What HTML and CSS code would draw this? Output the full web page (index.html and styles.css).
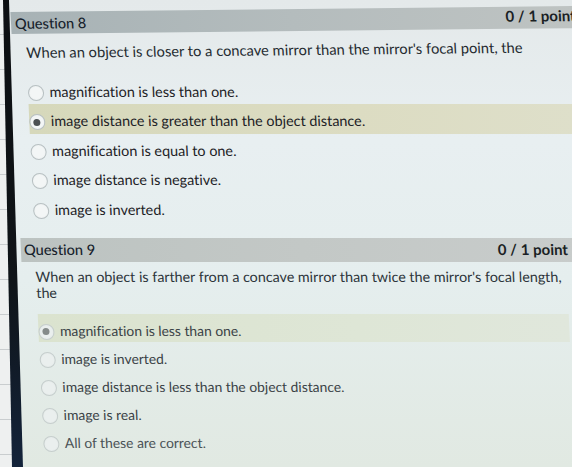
FILE: index.html
```html
<!DOCTYPE html>
<html>
<head>
<meta charset="utf-8">
<link rel="stylesheet" href="styles.css">
</head>
<body>
<div class="screen">
  <div class="display">
    <div class="content">
      <section class="q q8">
        <div class="qhead"><span class="title">Question 8</span><span class="score">0 / 1 point</span></div>
        <p class="qtext">When an object is closer to a concave mirror than the mirror's focal point, the</p>
        <ul class="opts">
          <li class="opt"><span class="radio"></span><span>magnification is less than one.</span></li>
          <li class="opt sel"><span class="radio"></span><span>image distance is greater than the object distance.</span></li>
          <li class="opt"><span class="radio"></span><span>magnification is equal to one.</span></li>
          <li class="opt"><span class="radio"></span><span>image distance is negative.</span></li>
          <li class="opt"><span class="radio"></span><span>image is inverted.</span></li>
        </ul>
      </section>
      <section class="q q9">
        <div class="qhead"><span class="title">Question 9</span><span class="score">0 / 1 point</span></div>
        <p class="qtext">When an object is farther from a concave mirror than twice the mirror's focal length,<br>the</p>
        <ul class="opts">
          <li class="opt sel"><span class="radio"></span><span>magnification is less than one.</span></li>
          <li class="opt"><span class="radio"></span><span>image is inverted.</span></li>
          <li class="opt"><span class="radio"></span><span>image distance is less than the object distance.</span></li>
          <li class="opt"><span class="radio"></span><span>image is real.</span></li>
          <li class="opt last"><span class="radio"></span><span>All of these are correct.</span></li>
        </ul>
      </section>
    </div>
  </div>
</div>
</body>
</html>
```
FILE: styles.css
```css
html, body {
  margin: 0;
  height: 100%;
}
body {
  overflow: hidden;
  background: repeating-linear-gradient(180deg, #eef0f0 0 34px, #c9cdcf 34px 35px);
  font-family: Lato, "Open Sans", "Liberation Sans", sans-serif;
  font-variant-ligatures: none;
}
.screen {
  height: 467px;
  background: linear-gradient(180deg, #0d0f12 0%, #0f1418 60%, #13233a 100%);
  clip-path: polygon(3px 0, 100% 0, 100% 100%, 12px 100%);
}
.display {
  height: 100%;
  overflow: hidden;
  clip-path: polygon(9px 0, 100% 0, 100% 100%, 23px 100%);
  background: linear-gradient(180deg, #e4e9ea 0%, #e8eff1 30%, #e5eeee 60%, #e1e9e2 100%);
}
.content {
  transform: skewX(2.5deg);
  transform-origin: 0 0;
  padding: 12px 0 0 10px;
}
.q {
  margin: 0;
}
.qhead {
  display: flex;
  justify-content: space-between;
  align-items: flex-start;
  font-size: 15px;
  line-height: 17px;
  color: #17222c;
}
.title {
  font-size: 14.6px;
  font-weight: 500;
}
.q8 .qhead {
  height: 22px;
  background: linear-gradient(90deg, #a7b2b5 0%, #b4bcbd 50%, #bec3c2 100%);
  transform: rotate(-0.6deg);
  transform-origin: 0 50%;
}
.q8 .title {
  padding: 3.2px 0 0 4px;
}
.q8 .score {
  padding-top: 0.5px;
  margin-right: -3px;
}
.score {
  font-weight: 700;
  color: #1a1f24;
}
.qtext {
  margin: 0 0 0 13.5px;
  line-height: 16px;
  color: #252b31;
}
.q8 .qtext {
  margin-top: 9.6px;
  font-size: 14.7px;
  white-space: nowrap;
  transform: rotate(-0.6deg);
  transform-origin: 0 50%;
}
.opts {
  list-style: none;
  margin: 0 0 0 13.5px;
  padding: 0;
}
.q8 .opts {
  margin-top: 15.4px;
}
.opt {
  display: flex;
  align-items: flex-start;
  gap: 6px;
  box-sizing: border-box;
  padding: 8px 0 0 0;
  line-height: 17px;
}
.q8 .opt {
  height: 29.5px;
  font-size: 14.4px;
  color: #1d2226;
}
.radio {
  flex: none;
  width: 16px;
  height: 16px;
  margin-top: 2px;
  box-sizing: border-box;
  border-radius: 50%;
  border: 1.5px solid #b8c0c2;
  background: radial-gradient(circle, #f3f6f6 0 55%, #e2e7e8 100%);
  display: flex;
  align-items: center;
  justify-content: center;
}
.q8 .sel {
  background: linear-gradient(90deg, #d6d8bb 0%, #dcdcc2 60%, #dedfca 100%);
}
.sel .radio::after {
  content: "";
  width: 7px;
  height: 7px;
  border-radius: 50%;
  background: #4b5053;
}
.q9 {
  margin-top: 15.5px;
}
.q9 .qhead {
  height: 24px;
  padding-right: 15px;
  background: linear-gradient(90deg, #bcc3c1 0%, #c3c8c6 50%, #c8cccb 100%);
}
.q9 .title {
  padding: 3.4px 0 0 3px;
}
.q9 .score {
  padding-top: 3.4px;
}
.q9 .qtext {
  margin-top: 6.6px;
  font-size: 14.3px;
  color: #2d353b;
}
.q9 .opts {
  margin-top: 13.4px;
  margin-right: 17px;
}
.q9 .opt {
  height: 28px;
  font-size: 13.85px;
  color: #3a4246;
}
.q9 .opt.last {
  color: #4a5256;
}
.q9 .radio {
  border-color: #c6cecd;
  background: radial-gradient(circle, #eaefee 0 55%, #dde4e2 100%);
}
.q9 .sel {
  background: linear-gradient(90deg, #dbe3cf 0%, #dee6d6 60%, #e0e7dc 100%);
}
.q9 .sel .radio::after {
  background: #858b8a;
}
```
